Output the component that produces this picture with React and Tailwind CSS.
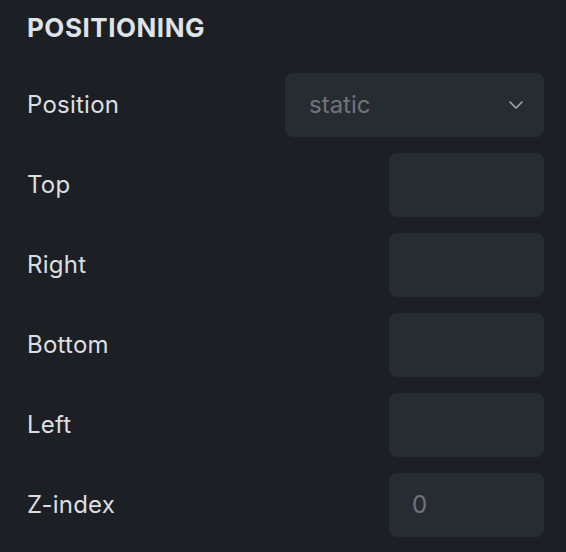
import { ChevronDown } from "lucide-react";

const fields = [
  { label: "Top", placeholder: "" },
  { label: "Right", placeholder: "" },
  { label: "Bottom", placeholder: "" },
  { label: "Left", placeholder: "" },
  { label: "Z-index", placeholder: "0" },
];

export default function App() {
  return (
    <div
      className="w-[566px] h-[552px] bg-[#1c1f23] pl-[27px] pr-[22px] pt-[12px]"
      style={{ fontFamily: "Inter, 'Noto Sans', sans-serif" }}
    >
      <h2 className="text-[26px] leading-[32px] font-bold tracking-[0.02em] text-[#dfe2e6]">
        POSITIONING
      </h2>

      <div className="mt-[29px] flex flex-col gap-4">
        <div className="flex items-center justify-between h-16">
          <span className="text-[24px] tracking-[0.01em] text-[#dcdfe2]">Position</span>
          <div className="w-[259px] h-16 rounded-lg bg-[#262c31] flex items-center justify-between pl-[24px] pr-[16px]">
            <span className="text-[24px] text-[#6f7479]">static</span>
            <ChevronDown size={24} strokeWidth={1.6} className="text-[#a3a8ad]" />
          </div>
        </div>

        {fields.map((f) => (
          <div key={f.label} className="flex items-center justify-between h-16">
            <span className="text-[24px] tracking-[0.01em] text-[#dcdfe2]">{f.label}</span>
            <div className="w-[155px] h-16 rounded-lg bg-[#262c31] flex items-center pl-[23px]">
              <span className="text-[24px] text-[#6f7479]">{f.placeholder}</span>
            </div>
          </div>
        ))}
      </div>
    </div>
  );
}
